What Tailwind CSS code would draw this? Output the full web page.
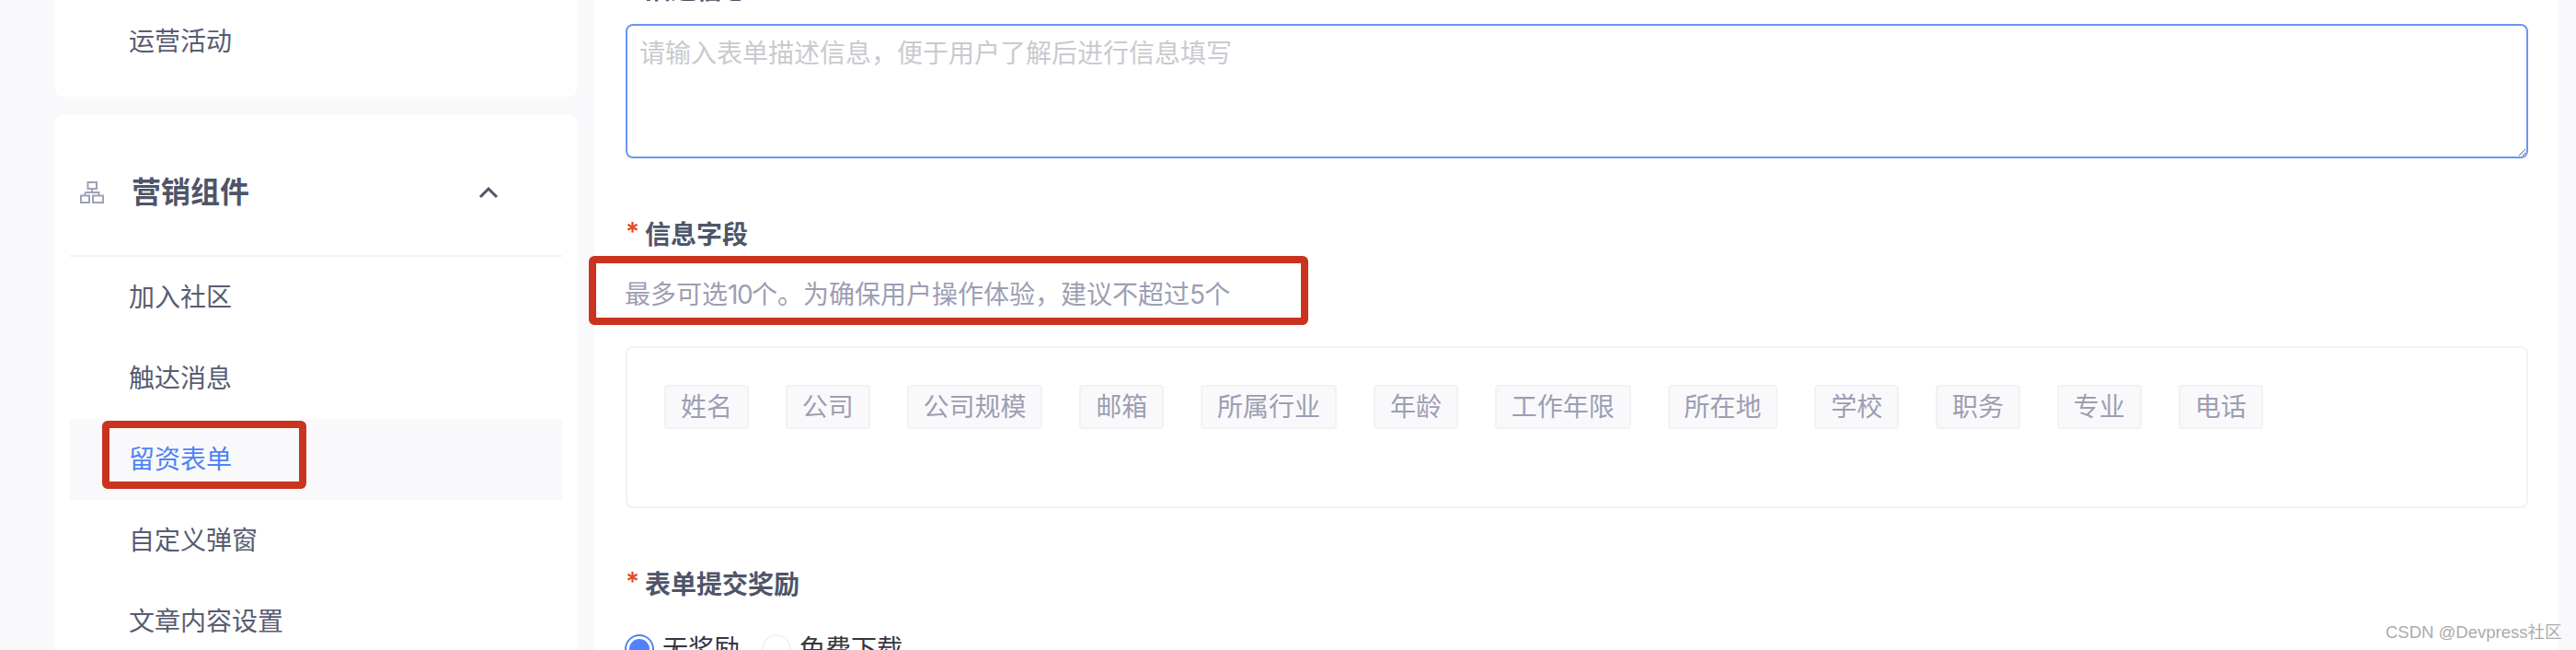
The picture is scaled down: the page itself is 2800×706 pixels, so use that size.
<!DOCTYPE html>
<html lang="zh-CN">
<head>
<meta charset="utf-8">
<script src="https://cdn.jsdelivr.net/npm/@tailwindcss/browser@4"></script>
</head>
<body class="m-0">
<div class="relative flex h-[706px] w-[2800px] overflow-hidden bg-[#f9f9fb] font-['Inter','Noto_Sans_CJK_SC','Noto_Sans',sans-serif] text-[28px] text-[#585c72]">

  <aside class="ml-[60px] flex w-[567px] shrink-0 flex-col gap-5">
    <div class="flex h-[105px] shrink-0 items-start rounded-b-lg bg-white pl-[80px] pt-[24px]">
      <span class="leading-[42px]">运营活动</span>
    </div>
    <div class="flex-1 rounded-t-lg bg-white px-4 pt-[15px]">
      <div class="flex h-[139px] items-center border-b-2 border-[#f1f2f4] pl-[11px] pr-[69px]">
        <svg class="h-[24px] w-[26px] shrink-0" viewBox="0 0 26 24" fill="none" stroke="#a0a1b8" stroke-width="2">
          <rect x="8.5" y="1" width="9.5" height="7"/>
          <path d="M13 8v4M5.5 12H20.5V15M5.5 12V15"/>
          <rect x="1" y="15.5" width="9" height="7.5"/>
          <rect x="14" y="15.5" width="11" height="7.5"/>
        </svg>
        <span class="ml-[30px] flex-1 text-[32px] font-semibold text-[#4e5569]">营销组件</span>
        <svg class="h-[14px] w-[22px]" viewBox="0 0 22 14" fill="none" stroke="#4e5569" stroke-width="3">
          <path d="M2 12 11 3l9 9"/>
        </svg>
      </div>
      <div class="flex h-[88px] items-center pl-[64px]">加入社区</div>
      <div class="flex h-[88px] items-center pl-[64px]">触达消息</div>
      <div class="flex h-[88px] items-center bg-[#f9f9fb] pl-[64px] text-[#4f83f7]">留资表单</div>
      <div class="flex h-[88px] items-center pl-[64px]">自定义弹窗</div>
      <div class="flex h-[88px] items-center pl-[64px]">文章内容设置</div>
    </div>
  </aside>

  <main class="ml-[19px] mr-5 flex-1 overflow-hidden bg-white pl-[34px] pr-[32px]">
    <div class="mt-[-32px]">
      <div class="flex h-[42px] items-center font-semibold text-[#4e5569]">
        <span class="w-[21px] pb-[6px] text-[#e34d26]">*</span><span>描述信息</span>
      </div>
      <textarea rows="3" placeholder="请输入表单描述信息，便于用户了解后进行信息填写" class="mt-[16px] block h-[146px] w-full rounded-lg border-2 border-[#6b95f5] bg-white px-[13px] py-[9px] text-[28px] leading-[42px] outline-none placeholder:text-[#c9cacf]"></textarea>

      <div class="mt-[62px] flex h-[42px] items-center font-semibold text-[#4e5569]">
        <span class="w-[21px] pb-[6px] text-[#e34d26]">*</span><span>信息字段</span>
      </div>
      <p class="ml-[-1px] mt-[23px] leading-[42px] text-[#9d9eb3]">最多可选<span class="tracking-[-1.5px]">10</span>个。为确保用户操作体验，建议不超过<span class="tracking-[-1px]">5</span>个</p>

      <div class="mt-[35px] flex h-[176px] items-start gap-[40px] rounded-lg border-2 border-[#f1f2f4] p-[40px] text-[#9d9eb3]">
        <span class="flex h-[48px] items-center rounded-[4px] border-2 border-[#f1f2f4] bg-[#f9f9fb] px-[15.9px] pb-[1px]">姓名</span>
        <span class="flex h-[48px] items-center rounded-[4px] border-2 border-[#f1f2f4] bg-[#f9f9fb] px-[15.9px] pb-[1px]">公司</span>
        <span class="flex h-[48px] items-center rounded-[4px] border-2 border-[#f1f2f4] bg-[#f9f9fb] px-[15.9px] pb-[1px]">公司规模</span>
        <span class="flex h-[48px] items-center rounded-[4px] border-2 border-[#f1f2f4] bg-[#f9f9fb] px-[15.9px] pb-[1px]">邮箱</span>
        <span class="flex h-[48px] items-center rounded-[4px] border-2 border-[#f1f2f4] bg-[#f9f9fb] px-[15.9px] pb-[1px]">所属行业</span>
        <span class="flex h-[48px] items-center rounded-[4px] border-2 border-[#f1f2f4] bg-[#f9f9fb] px-[15.9px] pb-[1px]">年龄</span>
        <span class="flex h-[48px] items-center rounded-[4px] border-2 border-[#f1f2f4] bg-[#f9f9fb] px-[15.9px] pb-[1px]">工作年限</span>
        <span class="flex h-[48px] items-center rounded-[4px] border-2 border-[#f1f2f4] bg-[#f9f9fb] px-[15.9px] pb-[1px]">所在地</span>
        <span class="flex h-[48px] items-center rounded-[4px] border-2 border-[#f1f2f4] bg-[#f9f9fb] px-[15.9px] pb-[1px]">学校</span>
        <span class="flex h-[48px] items-center rounded-[4px] border-2 border-[#f1f2f4] bg-[#f9f9fb] px-[15.9px] pb-[1px]">职务</span>
        <span class="flex h-[48px] items-center rounded-[4px] border-2 border-[#f1f2f4] bg-[#f9f9fb] px-[15.9px] pb-[1px]">专业</span>
        <span class="flex h-[48px] items-center rounded-[4px] border-2 border-[#f1f2f4] bg-[#f9f9fb] px-[15.9px] pb-[1px]">电话</span>
      </div>

      <div class="mt-[62px] flex h-[42px] items-center font-semibold text-[#4e5569]">
        <span class="w-[21px] pb-[6px] text-[#e34d26]">*</span><span>表单提交奖励</span>
      </div>
      <div class="ml-[-1px] mt-[28px] flex items-center text-[#33363f]">
        <span class="flex h-[32px] w-[32px] items-center justify-center rounded-full border-2 border-[#4f83f7]"><span class="h-[22px] w-[22px] rounded-full bg-[#4f83f7]"></span></span>
        <span class="ml-[9px] leading-[42px]">无奖励</span>
        <span class="ml-[24px] h-[32px] w-[32px] rounded-full border-2 border-[#f1f2f4]"></span>
        <span class="ml-[9px] leading-[42px]">免费下载</span>
      </div>
    </div>
  </main>

  <!-- red annotation frames drawn over the page -->
  <div class="absolute left-[111px] top-[457px] h-[74px] w-[222px] rounded-md border-[8px] border-[#c9331f]"></div>
  <div class="absolute left-[640px] top-[278px] h-[75px] w-[782px] rounded-md border-[8px] border-[#c9331f]"></div>
  <!-- watermark -->
  <span class="absolute left-[2593px] top-[675px] font-['Liberation_Sans','Noto_Sans_CJK_SC',sans-serif] text-[18.5px] leading-[24px] text-[#ababab]">CSDN @Devpress社区</span>
</div>
</body>
</html>
